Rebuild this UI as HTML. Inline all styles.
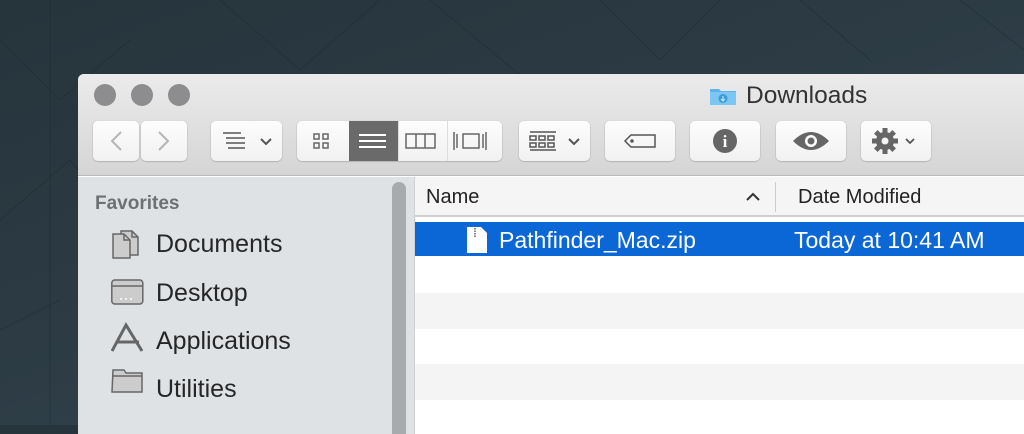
<!DOCTYPE html><html><head><style>
*{margin:0;padding:0;box-sizing:border-box}
body{width:1024px;height:425px;overflow:hidden;position:relative;font-family:"Liberation Sans",sans-serif;background:linear-gradient(160deg,#26343c 0%,#2d3c45 50%,#3d5564 100%)}
.a{position:absolute}
.win{left:78px;top:74px;width:960px;height:360px;border-radius:6px 0 0 0;overflow:hidden;background:#fff}
.tb{left:0;top:0;width:100%;height:102px;background:linear-gradient(#ebebeb,#d5d5d5);border-bottom:1px solid #b9b9b9}
.tl{width:22px;height:22px;border-radius:50%;background:#8d8c8f;top:10px}
.btn{top:47px;height:40px;background:linear-gradient(#fdfdfd,#f1f1f1);border-radius:5px;box-shadow:0 0.5px 1.5px rgba(0,0,0,.3)}
.side{left:0;top:103px;width:336px;height:260px;background:#dfe2e5}
.it{left:78px;font-size:25px;color:#262626}
</style></head><body>
<svg class="a" style="left:0;top:0" width="1024" height="425" stroke="#1d2a31" stroke-width="1.2" opacity=".4" fill="none">
<path d="M0 40 L60 100 L130 40 M220 0 L300 70 L380 0 M430 0 L520 75 M600 0 L660 60 L720 0 M800 0 L870 60 M960 0 L1024 50 M0 220 L70 160 L78 170 M0 330 L60 300 M50 0 V425"/></svg>
<div class="a win">
<div class="a tb"></div>
<div class="a tl" style="left:16px"></div><div class="a tl" style="left:53px"></div><div class="a tl" style="left:90px"></div>
<svg class="a" style="left:631px;top:12px" width="28" height="20"><path d="M1 3h9l2 2h15v14H1z" fill="#5db4eb"/><rect x="1" y="6" width="26" height="13" fill="#7bc7f3"/><circle cx="14" cy="12.5" r="4.5" fill="#3d9bd8"/><path d="M14 10v5M12 13l2 2 2-2" stroke="#bfe4fa" stroke-width="1.2" fill="none"/></svg>
<div class="a" style="left:668px;top:8px;font-size:24.5px;color:#333">Downloads</div>
<div class="a btn" style="left:15px;width:46px"></div><div class="a btn" style="left:63px;width:46px"></div>
<svg class="a" style="left:15px;top:47px" width="94" height="40" fill="none" stroke="#b5b5b5" stroke-width="2"><path d="M28 11l-9 9 9 9M66 11l9 9-9 9"/></svg>
<div class="a btn" style="left:133px;width:71px"></div>
<svg class="a" style="left:143px;top:56px" width="56" height="22" fill="none" stroke="#555" stroke-width="1.5"><path d="M2 3h18M5 8h19M5 13h19M7 18h17"/><path d="M40 9l5 5 5-5" stroke-width="2"/></svg>
<div class="a btn" style="left:219px;width:205px"></div>
<div class="a" style="left:271px;top:47px;width:49px;height:40px;background:#6a6a6a"></div>
<div class="a" style="left:320px;top:47px;width:1px;height:40px;background:#ddd"></div><div class="a" style="left:369px;top:47px;width:1px;height:40px;background:#ddd"></div>
<svg class="a" style="left:219px;top:47px" width="205" height="40" fill="none" stroke="#666" stroke-width="1.5"><rect x="17" y="13" width="5" height="5"/><rect x="26" y="13" width="5" height="5"/><rect x="17" y="22" width="5" height="5"/><rect x="26" y="22" width="5" height="5"/><path d="M62 14h27M62 20h27M62 26h27" stroke="#fff" stroke-width="2"/><rect x="109" y="13" width="29" height="14"/><path d="M119 13v14M128 13v14"/><rect x="166" y="13" width="16" height="14"/><path d="M157 11v18M160 13v14M186 13v14M189 11v18"/></svg>
<div class="a btn" style="left:441px;width:71px"></div>
<svg class="a" style="left:450px;top:56px" width="56" height="22" fill="none" stroke="#555" stroke-width="1.5"><path d="M2 2h26M2 20h26"/><rect x="2" y="6" width="6" height="4"/><rect x="11" y="6" width="6" height="4"/><rect x="20" y="6" width="6" height="4"/><rect x="2" y="13" width="6" height="4"/><rect x="11" y="13" width="6" height="4"/><rect x="20" y="13" width="6" height="4"/><path d="M41 9l5 5 5-5" stroke-width="2"/></svg>
<div class="a btn" style="left:527px;width:70px"></div>
<svg class="a" style="left:527px;top:47px" width="70" height="40" fill="none" stroke="#555" stroke-width="1.5"><path d="M26 14h24v12H26l-6-6z"/><circle cx="27" cy="20" r="1" fill="#555"/></svg>
<div class="a btn" style="left:612px;width:70px"></div>
<svg class="a" style="left:612px;top:47px" width="70" height="40"><circle cx="35" cy="20" r="12" fill="#666"/><text x="35" y="26" font-family="Liberation Serif" font-weight="bold" font-size="17" fill="#fff" text-anchor="middle">i</text></svg>
<div class="a btn" style="left:698px;width:70px"></div>
<svg class="a" style="left:698px;top:47px" width="70" height="40"><path d="M17 20Q35 2 53 20Q35 38 17 20z" fill="#666"/><circle cx="35" cy="20" r="6" fill="#fff"/><circle cx="35" cy="20" r="3.5" fill="#666"/></svg>
<div class="a btn" style="left:783px;width:70px"></div>
<svg class="a" style="left:783px;top:47px" width="70" height="40"><g transform="translate(24 20)" fill="#666"><circle r="9"/><g id="t"><rect x="-2.5" y="-13" width="5" height="26"/><rect x="-13" y="-2.5" width="26" height="5"/></g><use href="#t" transform="rotate(45)"/><circle r="3.5" fill="#f5f5f5"/></g><path d="M45 18l4 4 4-4" fill="none" stroke="#555" stroke-width="1.8"/></svg>
<div class="a side"></div>
<div class="a" style="left:314px;top:108px;width:14px;height:260px;border-radius:7px;background:#a8abae"></div>
<div class="a" style="left:336px;top:103px;width:1px;height:260px;background:#d0d0d0"></div>
<div class="a" style="left:17px;top:119px;font-size:19px;color:#6e7072;font-weight:bold">Favorites</div>
<svg class="a" style="left:33px;top:155px" width="34" height="220" stroke="#666" stroke-width="1.5"><path d="M10 2h11l6 6v18H10z" fill="#ccc"/><path d="M21 2v6h6" fill="none"/><path d="M2 5h11l6 6v18H2z" fill="#ccc"/><path d="M13 5v6h6" fill="none"/><rect x="0.8" y="51" width="31" height="24" rx="3" fill="#ccc"/><path d="M1 57h30" fill="none"/><path d="M9 70h2M14 70h2M19 70h2" stroke="#fff"/><path d="M1 122L15 96l16 26M6 113h22" fill="none" stroke-width="3"/><path d="M2 141h11l2 3h16v19H1z" fill="#ccc"/><path d="M1 147h30" fill="none"/></svg>
<div class="a it" style="top:156px">Documents</div>
<div class="a it" style="top:205px">Desktop</div>
<div class="a it" style="top:253px">Applications</div>
<div class="a it" style="top:301px">Utilities</div>
<div class="a" style="left:337px;top:103px;width:623px;height:40px;background:#f5f5f5;border-bottom:2px solid #cfcfcf"></div>
<div class="a" style="left:348px;top:112px;font-size:20px;color:#222">Name</div>
<svg class="a" style="left:668px;top:118px" width="14" height="10"><path d="M1 8l6-6 6 6" fill="none" stroke="#333" stroke-width="2"/></svg>
<div class="a" style="left:697px;top:108px;width:1px;height:30px;background:#ccc"></div>
<div class="a" style="left:720px;top:112px;font-size:20px;color:#222">Date Modified</div>
<div class="a" style="left:337px;top:148px;width:623px;height:34px;background:#0b67d6"></div>
<svg class="a" style="left:388px;top:152px" width="22" height="28"><path d="M1 1h14l6 6v20H1z" fill="#fff"/><path d="M9 2v10" stroke="#888" stroke-width="2" stroke-dasharray="1.5 1"/></svg>
<div class="a" style="left:421px;top:153px;font-size:23px;color:#fff">Pathfinder_Mac.zip</div>
<div class="a" style="left:716px;top:153px;font-size:23px;color:#fff">Today at 10:41 AM</div>
<div class="a" style="left:337px;top:219px;width:623px;height:36px;background:#f4f4f4"></div>
<div class="a" style="left:337px;top:290px;width:623px;height:36px;background:#f4f4f4"></div>
</div>
</body></html>
